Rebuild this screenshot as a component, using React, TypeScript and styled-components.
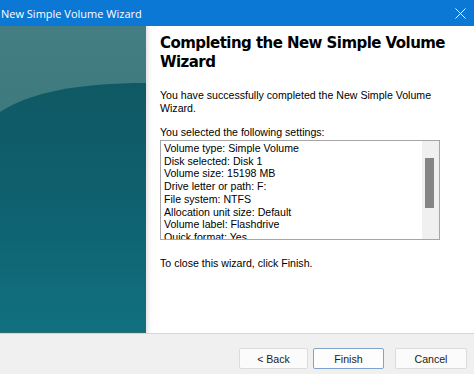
import React from 'react';
import styled, { createGlobalStyle } from 'styled-components';

const GlobalStyle = createGlobalStyle`
  html, body {
    margin: 0;
    padding: 0;
    background: #ffffff;
  }
`;

const Window = styled.div`
  width: 474px;
  height: 374px;
  display: flex;
  flex-direction: column;
  overflow: hidden;
  font-family: "Liberation Sans", Arial, sans-serif;
  color: #000;
`;

const TitleBar = styled.div`
  height: 26px;
  flex: none;
  background: #0b78d6;
  display: flex;
  align-items: center;
  justify-content: space-between;
  padding: 0 8px 0 1px;
  color: #fff;
  font-family: "Open Sans", "Noto Sans", sans-serif;
  font-size: 11px;
`;

const Body = styled.div`
  flex: 1;
  display: flex;
  min-height: 0;
`;

const SidePanel = styled.div`
  width: 146px;
  flex: none;
  background: linear-gradient(180deg, #447e82 0%, #2e6e73 100%);
  svg {
    display: block;
  }
`;

const Shade = styled.div`
  width: 6px;
  flex: none;
  background: linear-gradient(90deg, #e9e4e4 0%, #f7f5f5 50%, #ffffff 100%);
`;

const Content = styled.div`
  flex: 1;
  padding: 8px 0 0 8px;
  display: flex;
  flex-direction: column;
`;

const Heading = styled.h1`
  margin: 0;
  font-family: "DejaVu Sans", Verdana, sans-serif;
  font-weight: bold;
  font-size: 15px;
  line-height: 19px;
  letter-spacing: -0.55px;
  width: 300px;
`;

const Text = styled.p<{ $gap?: number }>`
  margin: ${p => p.$gap ?? 0}px 0 0 0;
  font-size: 10.6px;
  line-height: 13px;
  width: 280px;
`;

const ListBox = styled.div`
  margin-top: 1px;
  width: 280px;
  height: 100px;
  box-sizing: border-box;
  border: 1px solid #a6a6a6;
  display: flex;
  overflow: hidden;
`;

const ListItems = styled.div`
  flex: 1;
  padding: 1px 0 0 3px;
  font-size: 10.6px;
  line-height: 12.7px;
`;

const ScrollTrack = styled.div`
  width: 17px;
  flex: none;
  background: #f0f0f0;
  padding: 17px 0 0 3px;
  box-sizing: border-box;
`;

const ScrollThumb = styled.div`
  width: 9px;
  height: 50px;
  background: #858585;
`;

const Footer = styled.div`
  height: 41px;
  flex: none;
  border-top: 1px solid #d6d6d6;
  background: #f0f0f0;
  display: flex;
  justify-content: flex-end;
  align-items: flex-start;
  padding: 14px 7px 0 0;
  box-sizing: border-box;
`;

const Button = styled.button<{ $primary?: boolean; $width: number; $gapLeft?: number }>`
  width: ${p => p.$width}px;
  height: 21px;
  margin-left: ${p => p.$gapLeft ?? 0}px;
  padding: 0;
  background: ${p => (p.$primary ? '#fdfdfd' : '#fbfbfb')};
  border: 1px solid ${p => (p.$primary ? '#7da4cc' : '#dcdcdc')};
  border-radius: 2px;
  font-family: "Liberation Sans", Arial, sans-serif;
  font-size: 10.6px;
  color: #1a1a1a;
`;

const settings = [
  'Volume type: Simple Volume',
  'Disk selected: Disk 1',
  'Volume size: 15198 MB',
  'Drive letter or path: F:',
  'File system: NTFS',
  'Allocation unit size: Default',
  'Volume label: Flashdrive',
  'Quick format: Yes',
];

const PanelArt = () => (
  <svg width="146" height="306" viewBox="0 0 146 306">
    <defs>
      <linearGradient id="lower" x1="0" y1="0" x2="0" y2="1">
        <stop offset="0" stopColor="#0f5964" />
        <stop offset="0.5" stopColor="#0f6170" />
        <stop offset="1" stopColor="#11707f" />
      </linearGradient>
    </defs>
    <path d="M0 86 C 30 66, 80 57, 146 57 L 146 306 L 0 306 Z" fill="url(#lower)" />
  </svg>
);

export default function App() {
  return (
    <Window>
      <GlobalStyle />
      <TitleBar>
        <span>New Simple Volume Wizard</span>
        <svg width="11" height="11" viewBox="0 0 11 11">
          <path d="M0.5 0.5 L10.5 10.5 M10.5 0.5 L0.5 10.5" stroke="#fff" strokeWidth="1" />
        </svg>
      </TitleBar>
      <Body>
        <SidePanel>
          <PanelArt />
        </SidePanel>
        <Shade />
        <Content>
          <Heading>Completing the New Simple Volume Wizard</Heading>
          <Text $gap={17}>You have successfully completed the New Simple Volume Wizard.</Text>
          <Text $gap={11}>You selected the following settings:</Text>
          <ListBox>
            <ListItems>
              {settings.map(s => (
                <div key={s}>{s}</div>
              ))}
            </ListItems>
            <ScrollTrack>
              <ScrollThumb />
            </ScrollTrack>
          </ListBox>
          <Text $gap={17}>To close this wizard, click Finish.</Text>
        </Content>
      </Body>
      <Footer>
        <Button $width={69}>&lt; Back</Button>
        <Button $primary $width={71} $gapLeft={5}>Finish</Button>
        <Button $width={72} $gapLeft={11}>Cancel</Button>
      </Footer>
    </Window>
  );
}
